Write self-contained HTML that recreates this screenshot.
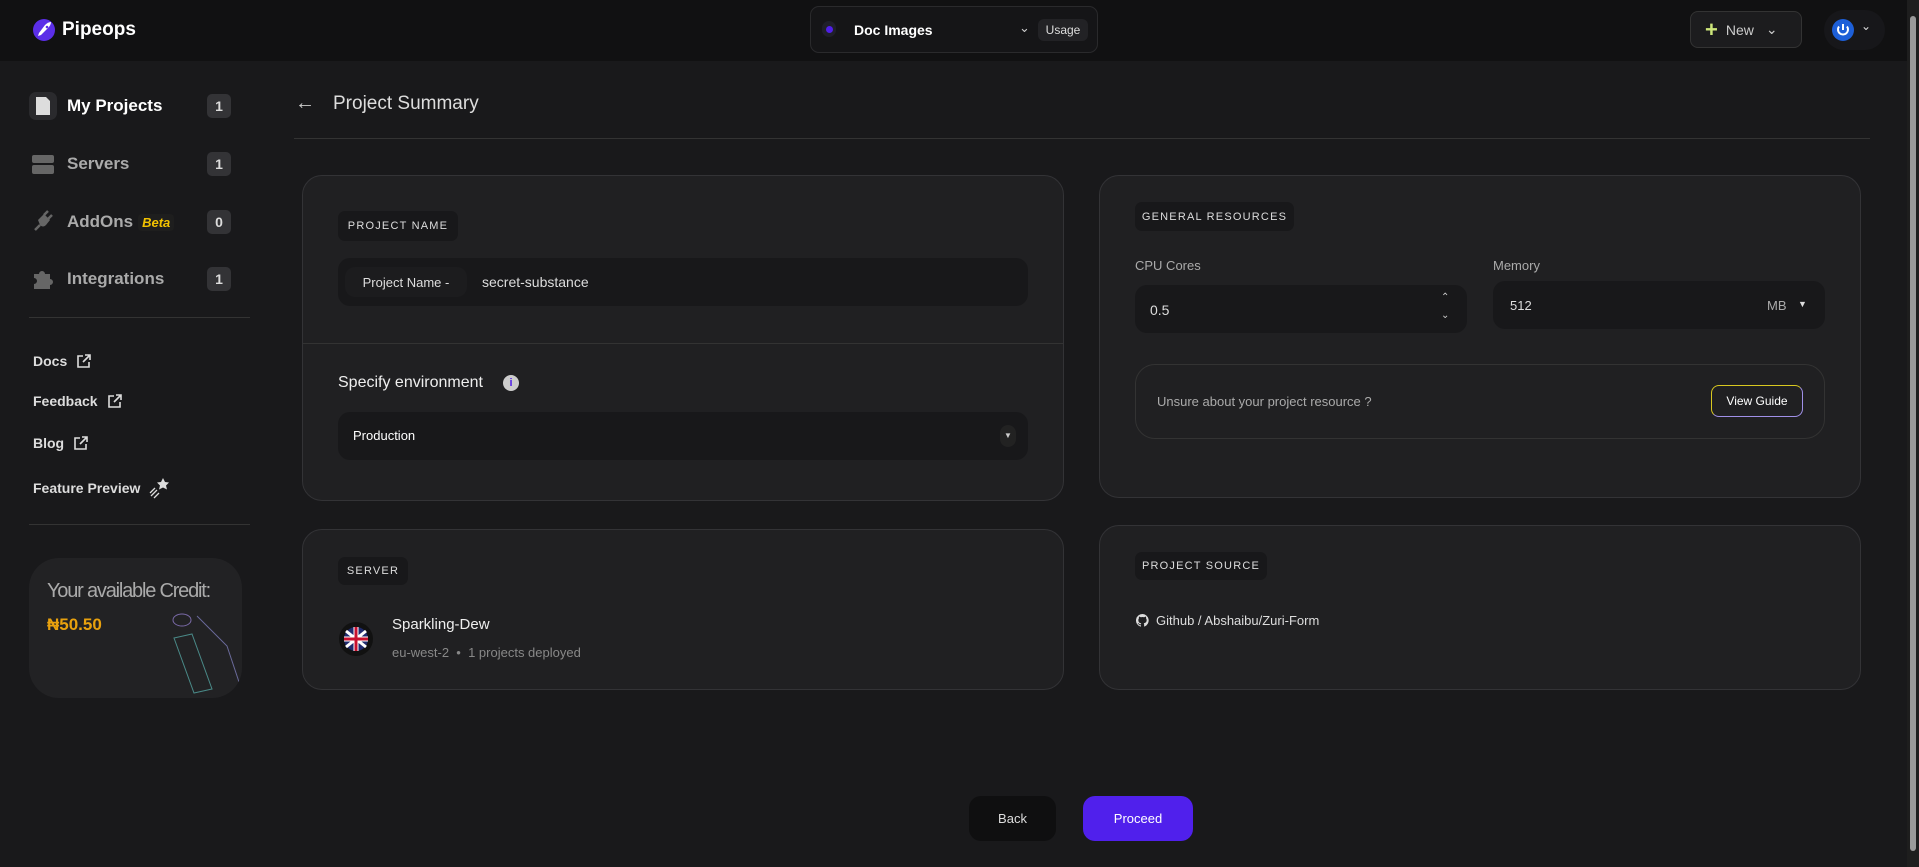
<!DOCTYPE html>
<html><head><meta charset="utf-8"><style>
*{box-sizing:border-box;margin:0;padding:0}
body{width:1919px;height:867px;overflow:hidden;background:#19191b;font-family:"Liberation Sans",sans-serif;color:#e6e6e6;position:relative}
.abs{position:absolute}
.top{left:0;top:0;width:1907px;height:61px;background:#111112}
.sb{left:1907px;top:0;width:12px;height:867px;background:#1e1e1e}
.sb div{position:absolute;left:3px;top:16px;width:6px;height:835px;background:#9a9a9a;border-radius:3px}
.nav{left:29px;display:flex;align-items:center;font-size:17px;color:#aaa;font-weight:bold;white-space:nowrap}
.badge{position:absolute;left:207px;width:24px;height:24px;background:#333336;border-radius:5px;color:#ddd;font-size:14px;display:flex;align-items:center;justify-content:center;font-weight:bold}
.link{left:33px;font-size:14px;font-weight:bold;color:#ddd;display:flex;align-items:center;gap:9px}
.card{background:#202022;border:1px solid #333336;border-radius:20px}
.chip{background:#18181a;border-radius:7px;font-size:11px;letter-spacing:1.2px;color:#ddd;display:flex;align-items:center;justify-content:center;white-space:nowrap}
.inp{background:#18181a;border-radius:12px}
.lbl{font-size:13px;color:#aaa}
</style></head><body>
<div class="abs top"></div>
<div class="abs sb"><div></div></div>
<svg class="abs" style="left:32px;top:18px" width="24" height="24" viewBox="0 0 24 24"><circle cx="12" cy="12" r="11" fill="#5b2ee8"/><path d="M9 17l-3 1 1-3 6-8c2-2 4-3 6-3 0 2-1 4-3 6z" fill="#fff"/><circle cx="15" cy="9" r="1.3" fill="#5b2ee8"/></svg>
<div class="abs" style="left:62px;top:19px;font-size:19px;font-weight:bold;color:#fff">Pipeops</div>
<div class="abs" style="left:810px;top:6px;width:288px;height:47px;border:1px solid #2a2a2c;border-radius:9px;background:#151517"></div>
<div class="abs" style="left:822px;top:21px;width:14px;height:16px;border-radius:7px;background:#1f1f29"></div>
<div class="abs" style="left:826px;top:26px;width:7px;height:7px;border-radius:50%;background:#4f1fe8"></div>
<div class="abs" style="left:854px;top:22px;font-size:14px;font-weight:bold;color:#fff">Doc Images</div>
<div class="abs" style="left:1019px;top:20px;font-size:13px;color:#ccc">&#8964;</div>
<div class="abs" style="left:1038px;top:19px;width:50px;height:22px;background:#222225;border-radius:6px;font-size:12px;color:#ddd;display:flex;align-items:center;justify-content:center">Usage</div>
<div class="abs" style="left:1690px;top:11px;width:112px;height:37px;border:1px solid #333;border-radius:8px;background:#1c1c1e;display:flex;align-items:center;gap:8px;padding-left:14px;font-size:14px;color:#ccc"><span style="font-size:22px;color:#cde67a;font-weight:bold;line-height:1">+</span>New <span style="margin-left:4px">&#8964;</span></div>
<div class="abs" style="left:1824px;top:10px;width:61px;height:40px;border-radius:20px;background:#17171a"></div>
<svg class="abs" style="left:1831px;top:18px" width="24" height="24" viewBox="0 0 24 24"><circle cx="12" cy="12" r="11" fill="#1d5fd8"/><path d="M8 8.5a5 5 0 1 0 8 0" stroke="#fff" stroke-width="2" fill="none"/><path d="M12 6v6" stroke="#fff" stroke-width="2"/></svg>
<div class="abs" style="left:1861px;top:19px;font-size:12px;color:#ddd">&#8964;</div>
<div class="abs" style="left:29px;top:92px;width:28px;height:28px;border-radius:7px;background:#2a2a2d"></div>
<svg class="abs" style="left:35px;top:96px" width="16" height="20" viewBox="0 0 16 20"><path d="M1 1h10l4 4v14H1z" fill="#ddd"/></svg>
<div class="abs nav" style="left:67px;top:96px;color:#fff">My Projects</div><div class="abs badge" style="top:94px">1</div>
<svg class="abs" style="left:32px;top:155px" width="22" height="19" viewBox="0 0 22 19"><rect x="0" y="0" width="22" height="8" rx="2" fill="#666"/><rect x="0" y="10" width="22" height="9" rx="2" fill="#666"/></svg>
<div class="abs nav" style="left:67px;top:154px">Servers</div><div class="abs badge" style="top:152px">1</div>
<svg class="abs" style="left:33px;top:210px" width="20" height="22" viewBox="0 0 20 22"><path d="M7 15l-5 5" stroke="#666" stroke-width="2.5"/><path d="M5 10l6-6 6 6-4 5c-2 2-4 2-6 0z" fill="#666"/><path d="M11 5l4-4M15 9l4-4" stroke="#666" stroke-width="2.5"/></svg>
<div class="abs nav" style="left:67px;top:212px">AddOns <span style="margin-left:5px;background:#1e1e1e;padding:1px 4px;border-radius:4px;color:#f2c200;font-style:italic;font-size:13px">Beta</span></div><div class="abs badge" style="top:210px">0</div>
<svg class="abs" style="left:32px;top:268px" width="22" height="22" viewBox="0 0 22 22"><path d="M2 6h5a3 3 0 1 1 6 0h5v5a3 3 0 1 1 0 6v4H2v-5a3 3 0 1 0 0-6z" fill="#666"/></svg>
<div class="abs nav" style="left:67px;top:269px">Integrations</div><div class="abs badge" style="top:267px">1</div>
<div class="abs" style="left:29px;top:317px;width:221px;height:1px;background:#333"></div>
<div class="abs link" style="top:353px">Docs <svg width="15" height="15" viewBox="0 0 15 15"><path d="M7 2H2v11h11V8M9 1h5v5M14 1L7 8" stroke="#ddd" stroke-width="1.6" fill="none"/></svg></div>
<div class="abs link" style="top:393px">Feedback <svg width="15" height="15" viewBox="0 0 15 15"><path d="M7 2H2v11h11V8M9 1h5v5M14 1L7 8" stroke="#ddd" stroke-width="1.6" fill="none"/></svg></div>
<div class="abs link" style="top:435px">Blog <svg width="15" height="15" viewBox="0 0 15 15"><path d="M7 2H2v11h11V8M9 1h5v5M14 1L7 8" stroke="#ddd" stroke-width="1.6" fill="none"/></svg></div>
<div class="abs link" style="top:477px">Feature Preview <svg width="22" height="22" viewBox="0 0 22 22"><path d="M14 1l2 4 4 .5-3 3 1 4-4-2-4 2 1-4-3-3 4-.5z" fill="#ddd"/><path d="M8 13l-6 6M10 16l-5 5M6 11l-5 5" stroke="#ddd" stroke-width="1.3"/></svg></div>
<div class="abs" style="left:29px;top:524px;width:221px;height:1px;background:#333"></div>
<div class="abs" style="left:29px;top:558px;width:213px;height:140px;border-radius:30px;background:#222224;overflow:hidden">
<div style="position:absolute;left:18px;top:22px;font-size:20px;color:#aaa;letter-spacing:-1.2px">Your available Credit:</div>
<div style="position:absolute;left:18px;top:57px;font-size:17px;color:#e8a10e;font-weight:bold">₦50.50</div>
<svg style="position:absolute;left:140px;top:50px" width="80" height="90" viewBox="0 0 80 90"><ellipse cx="13" cy="12" rx="9" ry="6" fill="none" stroke="#7a6aa8"/><path d="M5 30l18-4 20 55-18 4z" fill="none" stroke="#4a8a88"/><path d="M28 8l30 30 15 45" fill="none" stroke="#6a6a9a"/></svg>
</div>
<div class="abs" style="left:295px;top:92px;font-size:20px;color:#ccc">&#8592;</div>
<div class="abs" style="left:333px;top:93px;font-size:19px;color:#ddd">Project Summary</div>
<div class="abs" style="left:294px;top:138px;width:1576px;height:1px;background:#333"></div>
<div class="abs card" style="left:302px;top:175px;width:762px;height:326px"></div>
<div class="abs" style="left:303px;top:343px;width:760px;height:1px;background:#333"></div>
<div class="abs chip" style="left:338px;top:211px;width:120px;height:30px">PROJECT NAME</div>
<div class="abs inp" style="left:338px;top:258px;width:690px;height:48px"></div>
<div class="abs" style="left:345px;top:267px;width:122px;height:30px;border-radius:10px;background:#1c1c1e;font-size:13px;color:#ddd;display:flex;align-items:center;justify-content:center;white-space:nowrap">Project Name -</div>
<div class="abs" style="left:482px;top:274px;font-size:14px;color:#ddd">secret-substance</div>
<div class="abs" style="left:338px;top:374px;font-size:16px;color:#eee">Specify environment</div>
<div class="abs" style="left:503px;top:375px;width:16px;height:16px;border-radius:50%;background:#ccc;color:#4f1fe8;font-size:11px;font-weight:bold;text-align:center;line-height:16px">i</div>
<div class="abs inp" style="left:338px;top:412px;width:690px;height:48px"></div>
<div class="abs" style="left:353px;top:428px;font-size:13px;color:#fff">Production</div>
<div class="abs" style="left:1000px;top:425px;width:16px;height:22px;border-radius:8px;background:#222;color:#ccc;font-size:8px;text-align:center;line-height:22px">&#9660;</div>
<div class="abs card" style="left:1099px;top:175px;width:762px;height:323px"></div>
<div class="abs chip" style="left:1135px;top:202px;width:159px;height:29px">GENERAL RESOURCES</div>
<div class="abs lbl" style="left:1135px;top:258px">CPU Cores</div>
<div class="abs inp" style="left:1135px;top:285px;width:332px;height:48px"></div>
<div class="abs" style="left:1150px;top:302px;font-size:14px;color:#ddd">0.5</div>
<div class="abs" style="left:1441px;top:292px;font-size:10px;color:#ccc">&#8963;</div>
<div class="abs" style="left:1441px;top:310px;font-size:10px;color:#ccc">&#8964;</div>
<div class="abs lbl" style="left:1493px;top:258px">Memory</div>
<div class="abs inp" style="left:1493px;top:281px;width:332px;height:48px"></div>
<div class="abs" style="left:1510px;top:298px;font-size:13px;color:#ddd">512</div>
<div class="abs" style="left:1767px;top:298px;font-size:13px;color:#aaa">MB</div>
<div class="abs" style="left:1798px;top:299px;font-size:9px;color:#ddd">&#9660;</div>
<div class="abs" style="left:1135px;top:364px;width:690px;height:75px;border:1px solid #333;border-radius:20px"></div>
<div class="abs" style="left:1157px;top:394px;font-size:13px;color:#aaa">Unsure about your project resource ?</div>
<div class="abs" style="left:1711px;top:385px;width:92px;height:32px;border:1px solid;border-color:#d8c820 #a090e8 #a090e8 #d8c820;border-radius:8px;font-size:12px;color:#fff;display:flex;align-items:center;justify-content:center">View Guide</div>
<div class="abs card" style="left:302px;top:529px;width:762px;height:161px"></div>
<div class="abs chip" style="left:338px;top:557px;width:70px;height:28px">SERVER</div>
<svg class="abs" style="left:339px;top:622px" width="34" height="34" viewBox="0 0 34 34"><circle cx="17" cy="17" r="17" fill="#111"/><circle cx="17" cy="17" r="12" fill="#1f2a6e"/><path d="M7 9l20 16M27 9L7 25" stroke="#fff" stroke-width="3"/><path d="M17 5v24M5 17h24" stroke="#fff" stroke-width="5"/><path d="M17 5v24M5 17h24" stroke="#c8102e" stroke-width="3"/></svg>
<div class="abs" style="left:392px;top:616px;font-size:15px;color:#eee">Sparkling-Dew</div>
<div class="abs" style="left:392px;top:645px;font-size:13px;color:#888">eu-west-2 &nbsp;•&nbsp; 1 projects deployed</div>
<div class="abs card" style="left:1099px;top:525px;width:762px;height:165px"></div>
<div class="abs chip" style="left:1135px;top:552px;width:132px;height:28px">PROJECT SOURCE</div>
<svg class="abs" style="left:1136px;top:614px" width="13" height="13" viewBox="0 0 16 16"><path fill="#ddd" d="M8 0a8 8 0 0 0-2.5 15.6c.4 0 .5-.2.5-.4v-1.5c-2.2.5-2.7-1-2.7-1-.4-.9-.9-1.2-.9-1.2-.7-.5.1-.5.1-.5.8.1 1.2.8 1.2.8.7 1.300 1.900.9 2.300.7.1-.5.3-.9.5-1.1-1.800-.2-3.600-.9-3.600-4 0-.9.3-1.600.8-2.100-.1-.2-.4-1 .1-2.100 0 0 .7-.2 2.200.8a7.500 7.500 0 0 1 4 0c1.500-1 2.200-.8 2.200-.8.4 1.100.2 1.900.1 2.100.5.6.8 1.300.8 2.100 0 3.100-1.900 3.700-3.600 3.900.3.3.5.8.5 1.500v2.200c0 .2.1.5.6.4A8 8 0 0 0 8 0z"/></svg>
<div class="abs" style="left:1156px;top:613px;font-size:13px;color:#ddd">Github / Abshaibu/Zuri-Form</div>
<div class="abs" style="left:969px;top:796px;width:87px;height:45px;border-radius:12px;background:#0f0f10;font-size:13px;color:#ddd;display:flex;align-items:center;justify-content:center">Back</div>
<div class="abs" style="left:1083px;top:796px;width:110px;height:45px;border-radius:12px;background:#5020ec;font-size:13px;color:#fff;display:flex;align-items:center;justify-content:center">Proceed</div>
</body></html>
